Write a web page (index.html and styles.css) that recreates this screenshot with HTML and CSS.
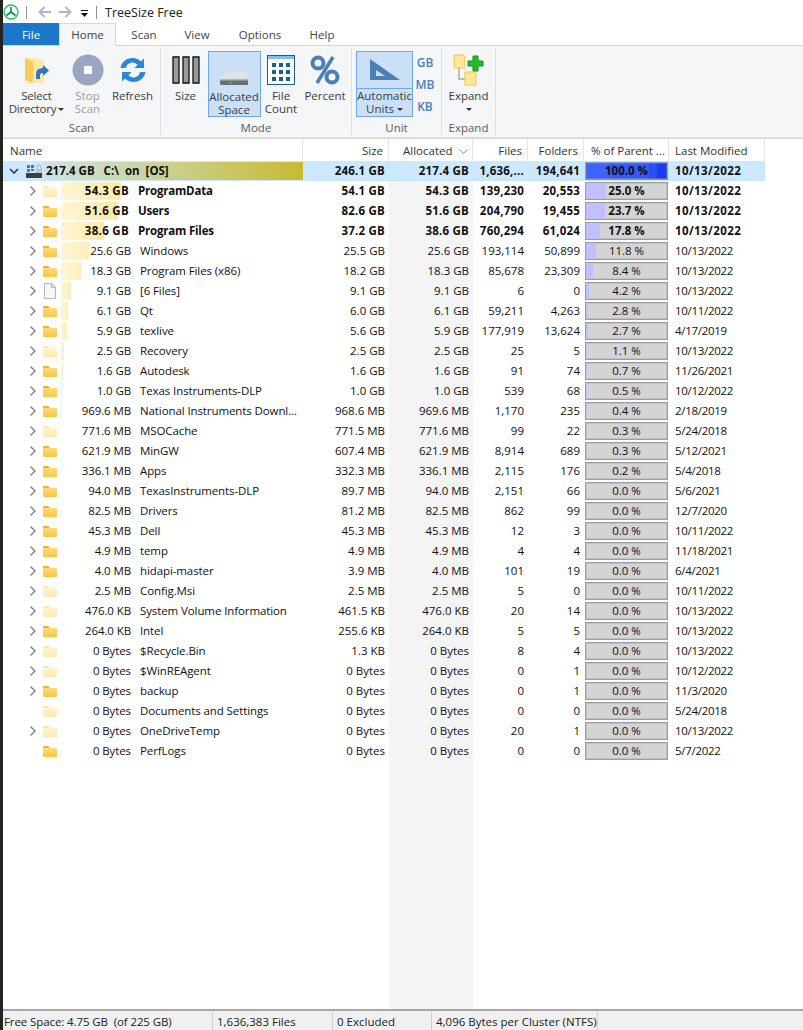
FILE: index.html
```html
<!DOCTYPE html>
<html lang="en">
<head>
    <meta charset="UTF-8">
    <title>TreeSize Free</title>
    <link rel="stylesheet" href="styles.css">
</head>
<body>
<svg class="defs" width="0" height="0">
    <defs>
        <linearGradient id="fold-full" x1="0" y1="0" x2="0" y2="1">
            <stop offset="0" stop-color="#fde08a"/><stop offset="1" stop-color="#fbc63e"/>
        </linearGradient>
        <linearGradient id="fold-pale" x1="0" y1="0" x2="0" y2="1">
            <stop offset="0" stop-color="#fff6d8"/><stop offset="1" stop-color="#feeab0"/>
        </linearGradient>
        <symbol id="folder" viewBox="0 0 14 11">
            <path d="M0 1q0-1 1-1h4l2 2h6q1 0 1 1v7q0 1-1 1H1q-1 0-1-1z" fill="url(#fold-full)"/>
            <path d="M0 1q0-1 1-1h4l2 2H0z" fill="#eeb02e"/>
        </symbol>
        <symbol id="folder-pale" viewBox="0 0 14 11">
            <path d="M0 1q0-1 1-1h4l2 2h6q1 0 1 1v7q0 1-1 1H1q-1 0-1-1z" fill="url(#fold-pale)"/>
            <path d="M0 1q0-1 1-1h4l2 2H0z" fill="#fbe7ae"/>
        </symbol>
        <symbol id="chev" viewBox="0 0 8 12">
            <path d="M1.5 1.5 6 6l-4.500 4.500" fill="none" stroke="#8a8a8a" stroke-width="1.500"/>
        </symbol>
    </defs>
</svg>

<div class="edge"></div>
<div class="app">
    <div class="titlebar">
        <svg class="logo" width="16" height="16" viewBox="0 0 16 16">
            <circle cx="8" cy="8" r="7" fill="#fff" stroke="#19c25c" stroke-width="1.300"/>
            <path d="M8 3v5M8 8l-4.500 3.500M8 8l4.500 3.500" stroke="#0d8a4a" stroke-width="1.600" fill="none"/>
        </svg>
        <span class="qsep first"></span>
        <svg class="arrow" width="14" height="12" viewBox="0 0 14 12"><path d="M13 6H2M6.500 1 1.500 6l5 5" fill="none" stroke="#aab7cd" stroke-width="2"/></svg>
        <svg class="arrow next" width="14" height="12" viewBox="0 0 14 12"><path d="M1 6h11M7.500 1l5 5-5 5" fill="none" stroke="#aab7cd" stroke-width="2"/></svg>
        <svg class="qdrop" width="7" height="7" viewBox="0 0 7 7"><path d="M0 0h7v1H0zM0 3h7L3.500 7z" fill="#111"/></svg>
        <span class="qsep"></span>
        <span class="apptitle">TreeSize Free</span>
    </div>

    <div class="tabs">
        <div class="tab file">File</div>
        <div class="tab active">Home</div>
        <div class="tab scan">Scan</div>
        <div class="tab view">View</div>
        <div class="tab options">Options</div>
        <div class="tab help">Help</div>
    </div>

    <div class="ribbon">
        <div class="group g-scan">
            <div class="items">
                <div class="btn w-select">
                    <svg class="ico" width="26" height="30" viewBox="0 0 26 30">
                        <path d="M1 3h11l8 3v22H1z" fill="#fde9a4"/>
                        <path d="M1 3l8 4v20l-8-2z" fill="#f7c95c"/>
                        <path d="M12 24v-5q0-6 7-6v-3l6 5.500-6 5.500v-3q-3 0-3 2v4z" fill="#2b78c8"/>
                    </svg>
                    <span class="nowrap">Select<br>Directory<i class="caret side"></i></span>
                </div>
                <div class="btn w-stop off">
                    <svg class="ico" width="32" height="32" viewBox="0 0 32 32">
                        <circle cx="16" cy="16" r="15.500" fill="#9aa6c2"/>
                        <rect x="12" y="12" width="8" height="8" fill="#fff"/>
                    </svg>
                    <span>Stop<br>Scan</span>
                </div>
                <div class="btn w-refresh">
                    <svg class="ico" width="30" height="30" viewBox="0 0 30 30">
                        <path d="M2.500 13C3.500 7 8.500 3 14.500 3c3.500 0 6.500 1.500 8.500 3.500L26 3.500V13h-9.500l3-3c-1.200-1.500-3-2.500-5-2.500-3.300 0-6 2.300-6.500 5.500z" fill="#2b85db"/>
                        <path d="M27.500 17c-1 6-6 10-12 10-3.500 0-6.500-1.500-8.500-3.500L4 26.500V17h9.500l-3 3c1.200 1.500 3 2.500 5 2.500 3.300 0 6-2.300 6.500-5.500z" fill="#2b85db"/>
                    </svg>
                    <span>Refresh</span>
                </div>
            </div>
            <div class="glabel">Scan</div>
        </div>

        <div class="group g-mode">
            <div class="items">
                <div class="btn w-size">
                    <svg class="ico" width="28" height="28" viewBox="0 0 28 28">
                        <path d="M1 1h6v26H1zM11 1h6v26h-6zM21 1h6v26h-6z" fill="#9a9a9a" stroke="#111" stroke-width="1.300"/>
                    </svg>
                    <span>Size</span>
                </div>
                <div class="btn w-alloc on">
                    <svg class="ico" width="30" height="32" viewBox="0 0 30 32">
                        <path d="M1 24 9 17h18l2 6z" fill="#dfe3e3"/>
                        <path d="M1 24h28v5q0 1-1 1H3q-2 0-2-1z" fill="#6c6f70"/>
                        <path d="M1 24h28v1.500H1z" fill="#b4b8b8"/>
                        <rect x="11" y="27" width="2" height="1.500" fill="#3ad06a"/>
                    </svg>
                    <span>Allocated<br>Space</span>
                </div>
                <div class="btn w-count">
                    <svg class="ico" width="28" height="30" viewBox="0 0 28 30">
                        <rect x=".5" y=".5" width="27" height="29" fill="#fff" stroke="#1f5f86"/>
                        <rect x="1" y="1" width="26" height="3" fill="#7ec0ee"/>
                        <path d="M5 8h4v4H5zM12 8h4v4h-4zM19 8h4v4h-4zM5 15h4v4H5zM12 15h4v4h-4zM19 15h4v4h-4zM5 22h4v4H5zM12 22h4v4h-4zM19 22h4v4h-4z" fill="#1f5f86"/>
                    </svg>
                    <span>File<br>Count</span>
                </div>
                <div class="btn w-pct">
                    <svg class="ico" width="30" height="30" viewBox="0 0 30 30">
                        <circle cx="8" cy="8" r="5.500" fill="none" stroke="#4b7fb8" stroke-width="4"/>
                        <circle cx="22" cy="22" r="5.500" fill="none" stroke="#4b7fb8" stroke-width="4"/>
                        <path d="M23 2 7 28" stroke="#4b7fb8" stroke-width="3.500"/>
                    </svg>
                    <span>Percent</span>
                </div>
            </div>
            <div class="glabel">Mode</div>
        </div>

        <div class="group g-unit">
            <div class="items">
                <div class="split">
                    <div class="split-top">
                        <svg width="30" height="22" viewBox="0 0 30 22">
                            <path fill-rule="evenodd" d="M0 0 30 21H0zM6 11v6h9z" fill="#4b7fb8"/>
                        </svg>
                    </div>
                    <div class="split-bottom">Automatic<br>Units <i class="caret"></i></div>
                </div>
                <div class="units"><span>GB</span><span>MB</span><span>KB</span></div>
            </div>
            <div class="glabel">Unit</div>
        </div>

        <div class="group g-expand">
            <div class="items">
                <div class="btn w-expand">
                    <svg class="ico" width="32" height="32" viewBox="0 0 32 32">
                        <path d="M6 12v13h12" fill="none" stroke="#a9a9a9" stroke-width="1.500"/>
                        <path d="M1 1h9l2 2v11H1z" fill="#fde79c" stroke="#f3c54a"/>
                        <path d="M12 19h9l2 2v11H12z" transform="translate(0 -1)" fill="#fde79c" stroke="#f3c54a"/>
                        <path d="M20 2h5v5h5v5h-5v5h-5v-5h-5V7h5z" fill="#1fbf2c" stroke="#148a1e"/>
                    </svg>
                    <span>Expand<br><i class="caret"></i></span>
                </div>
            </div>
            <div class="glabel">Expand</div>
        </div>
    </div>

    <div class="treehead">
        <div class="hcell h-name">Name</div>
        <div class="hcell h-right">Size</div>
        <div class="hcell h-alloc">Allocated
            <svg width="9" height="5" viewBox="0 0 9 5"><path d="M.5.5l4 4 4-4" fill="none" stroke="#9a9a9a"/></svg>
        </div>
        <div class="hcell h-right">Files</div>
        <div class="hcell h-right">Folders</div>
        <div class="hcell h-pct">% of Parent ...</div>
        <div class="hcell h-date">Last Modified</div>
    </div>

    <div class="tree">
        <div class="row root bold">
            <div class="c-name">
                <svg class="rootchev" width="10" height="6" viewBox="0 0 10 6"><path d="M1 1l4 4 4-4" fill="none" stroke="#333" stroke-width="1.500"/></svg>
                <svg class="drive" width="16" height="15" viewBox="0 0 16 15">
                    <path d="M1 1h3v3H1zM5 1h3v3H5zM1 5h3v3H1zM5 5h3v2H5z" fill="#2f7fd0"/>
                    <path d="M11 5V3q0-2 2-2t2 2v2" fill="none" stroke="#aab"/>
                    <rect x="10" y="5" width="6" height="5" fill="#b7c7d8"/>
                    <path d="M0 9h16v5H0z" fill="#3c3f44"/>
                </svg>
                <div class="rootbar">217.4 GB&nbsp;&nbsp; C:\&nbsp; on&nbsp; [OS]</div>
            </div>
            <div class="num">246.1 GB</div><div class="num">217.4 GB</div><div class="num">1,636,...</div><div class="num">194,641</div>
            <div class="pct"><div class="pbar rootfill"><span>100.0 %</span></div></div>
            <div class="date">10/13/2022</div>
        </div>

        <div class="row bold"><div class="c-name"><svg class="tw"><use href="#chev"/></svg><svg class="fo"><use href="#folder-pale"/></svg><span class="amt" style="background-size:60px 18px">54.3 GB</span><span class="nm">ProgramData</span></div><div class="num">54.1 GB</div><div class="num">54.3 GB</div><div class="num">139,230</div><div class="num">20,553</div><div class="pct"><div class="pbar"><i style="width:25%"></i><span>25.0 %</span></div></div><div class="date">10/13/2022</div></div>
        <div class="row bold"><div class="c-name"><svg class="tw"><use href="#chev"/></svg><svg class="fo"><use href="#folder"/></svg><span class="amt" style="background-size:57px 18px">51.6 GB</span><span class="nm">Users</span></div><div class="num">82.6 GB</div><div class="num">51.6 GB</div><div class="num">204,790</div><div class="num">19,455</div><div class="pct"><div class="pbar"><i style="width:23.7%"></i><span>23.7 %</span></div></div><div class="date">10/13/2022</div></div>
        <div class="row bold"><div class="c-name"><svg class="tw"><use href="#chev"/></svg><svg class="fo"><use href="#folder"/></svg><span class="amt" style="background-size:43px 18px">38.6 GB</span><span class="nm">Program Files</span></div><div class="num">37.2 GB</div><div class="num">38.6 GB</div><div class="num">760,294</div><div class="num">61,024</div><div class="pct"><div class="pbar"><i style="width:17.8%"></i><span>17.8 %</span></div></div><div class="date">10/13/2022</div></div>
        <div class="row"><div class="c-name"><svg class="tw"><use href="#chev"/></svg><svg class="fo"><use href="#folder"/></svg><span class="amt" style="background-size:28px 18px">25.6 GB</span><span class="nm">Windows</span></div><div class="num">25.5 GB</div><div class="num">25.6 GB</div><div class="num">193,114</div><div class="num">50,899</div><div class="pct"><div class="pbar"><i style="width:11.8%"></i><span>11.8 %</span></div></div><div class="date">10/13/2022</div></div>
        <div class="row"><div class="c-name"><svg class="tw"><use href="#chev"/></svg><svg class="fo"><use href="#folder"/></svg><span class="amt" style="background-size:20px 18px">18.3 GB</span><span class="nm">Program Files (x86)</span></div><div class="num">18.2 GB</div><div class="num">18.3 GB</div><div class="num">85,678</div><div class="num">23,309</div><div class="pct"><div class="pbar"><i style="width:8.4%"></i><span>8.4 %</span></div></div><div class="date">10/13/2022</div></div>
        <div class="row"><div class="c-name"><svg class="tw"><use href="#chev"/></svg><svg class="fo page" viewBox="0 0 12 16"><path d="M.5.500h7l4 4v11H.500z" fill="#f7f7f7" stroke="#b5b5b5"/><path d="M7.500.500v4h4" fill="none" stroke="#b5b5b5"/></svg><span class="amt" style="background-size:10px 18px">9.1 GB</span><span class="nm">[6 Files]</span></div><div class="num">9.1 GB</div><div class="num">9.1 GB</div><div class="num">6</div><div class="num">0</div><div class="pct"><div class="pbar"><i style="width:4.2%"></i><span>4.2 %</span></div></div><div class="date">10/13/2022</div></div>
        <div class="row"><div class="c-name"><svg class="tw"><use href="#chev"/></svg><svg class="fo"><use href="#folder"/></svg><span class="amt" style="background-size:7px 18px">6.1 GB</span><span class="nm">Qt</span></div><div class="num">6.0 GB</div><div class="num">6.1 GB</div><div class="num">59,211</div><div class="num">4,263</div><div class="pct"><div class="pbar"><i style="width:2.8%"></i><span>2.8 %</span></div></div><div class="date">10/11/2022</div></div>
        <div class="row"><div class="c-name"><svg class="tw"><use href="#chev"/></svg><svg class="fo"><use href="#folder"/></svg><span class="amt" style="background-size:6px 18px">5.9 GB</span><span class="nm">texlive</span></div><div class="num">5.6 GB</div><div class="num">5.9 GB</div><div class="num">177,919</div><div class="num">13,624</div><div class="pct"><div class="pbar"><i style="width:2.7%"></i><span>2.7 %</span></div></div><div class="date">4/17/2019</div></div>
        <div class="row"><div class="c-name"><svg class="tw"><use href="#chev"/></svg><svg class="fo"><use href="#folder-pale"/></svg><span class="amt" style="background-size:3px 18px">2.5 GB</span><span class="nm">Recovery</span></div><div class="num">2.5 GB</div><div class="num">2.5 GB</div><div class="num">25</div><div class="num">5</div><div class="pct"><div class="pbar"><i style="width:1.1%"></i><span>1.1 %</span></div></div><div class="date">10/13/2022</div></div>
        <div class="row"><div class="c-name"><svg class="tw"><use href="#chev"/></svg><svg class="fo"><use href="#folder"/></svg><span class="amt" style="background-size:2px 18px">1.6 GB</span><span class="nm">Autodesk</span></div><div class="num">1.6 GB</div><div class="num">1.6 GB</div><div class="num">91</div><div class="num">74</div><div class="pct"><div class="pbar"><i style="width:.7%"></i><span>0.7 %</span></div></div><div class="date">11/26/2021</div></div>
        <div class="row"><div class="c-name"><svg class="tw"><use href="#chev"/></svg><svg class="fo"><use href="#folder"/></svg><span class="amt" style="background-size:1px 18px">1.0 GB</span><span class="nm">Texas Instruments-DLP</span></div><div class="num">1.0 GB</div><div class="num">1.0 GB</div><div class="num">539</div><div class="num">68</div><div class="pct"><div class="pbar"><i style="width:.5%"></i><span>0.5 %</span></div></div><div class="date">10/12/2022</div></div>
        <div class="row"><div class="c-name"><svg class="tw"><use href="#chev"/></svg><svg class="fo"><use href="#folder"/></svg><span class="amt" style="background-size:1px 18px">969.6 MB</span><span class="nm">National Instruments Downl...</span></div><div class="num">968.6 MB</div><div class="num">969.6 MB</div><div class="num">1,170</div><div class="num">235</div><div class="pct"><div class="pbar"><i style="width:.4%"></i><span>0.4 %</span></div></div><div class="date">2/18/2019</div></div>
        <div class="row"><div class="c-name"><svg class="tw"><use href="#chev"/></svg><svg class="fo"><use href="#folder-pale"/></svg><span class="amt">771.6 MB</span><span class="nm">MSOCache</span></div><div class="num">771.5 MB</div><div class="num">771.6 MB</div><div class="num">99</div><div class="num">22</div><div class="pct"><div class="pbar"><span>0.3 %</span></div></div><div class="date">5/24/2018</div></div>
        <div class="row"><div class="c-name"><svg class="tw"><use href="#chev"/></svg><svg class="fo"><use href="#folder"/></svg><span class="amt">621.9 MB</span><span class="nm">MinGW</span></div><div class="num">607.4 MB</div><div class="num">621.9 MB</div><div class="num">8,914</div><div class="num">689</div><div class="pct"><div class="pbar"><span>0.3 %</span></div></div><div class="date">5/12/2021</div></div>
        <div class="row"><div class="c-name"><svg class="tw"><use href="#chev"/></svg><svg class="fo"><use href="#folder"/></svg><span class="amt">336.1 MB</span><span class="nm">Apps</span></div><div class="num">332.3 MB</div><div class="num">336.1 MB</div><div class="num">2,115</div><div class="num">176</div><div class="pct"><div class="pbar"><span>0.2 %</span></div></div><div class="date">5/4/2018</div></div>
        <div class="row"><div class="c-name"><svg class="tw"><use href="#chev"/></svg><svg class="fo"><use href="#folder"/></svg><span class="amt">94.0 MB</span><span class="nm">TexasInstruments-DLP</span></div><div class="num">89.7 MB</div><div class="num">94.0 MB</div><div class="num">2,151</div><div class="num">66</div><div class="pct"><div class="pbar"><span>0.0 %</span></div></div><div class="date">5/6/2021</div></div>
        <div class="row"><div class="c-name"><svg class="tw"><use href="#chev"/></svg><svg class="fo"><use href="#folder"/></svg><span class="amt">82.5 MB</span><span class="nm">Drivers</span></div><div class="num">81.2 MB</div><div class="num">82.5 MB</div><div class="num">862</div><div class="num">99</div><div class="pct"><div class="pbar"><span>0.0 %</span></div></div><div class="date">12/7/2020</div></div>
        <div class="row"><div class="c-name"><svg class="tw"><use href="#chev"/></svg><svg class="fo"><use href="#folder"/></svg><span class="amt">45.3 MB</span><span class="nm">Dell</span></div><div class="num">45.3 MB</div><div class="num">45.3 MB</div><div class="num">12</div><div class="num">3</div><div class="pct"><div class="pbar"><span>0.0 %</span></div></div><div class="date">10/11/2022</div></div>
        <div class="row"><div class="c-name"><svg class="tw"><use href="#chev"/></svg><svg class="fo"><use href="#folder"/></svg><span class="amt">4.9 MB</span><span class="nm">temp</span></div><div class="num">4.9 MB</div><div class="num">4.9 MB</div><div class="num">4</div><div class="num">4</div><div class="pct"><div class="pbar"><span>0.0 %</span></div></div><div class="date">11/18/2021</div></div>
        <div class="row"><div class="c-name"><svg class="tw"><use href="#chev"/></svg><svg class="fo"><use href="#folder"/></svg><span class="amt">4.0 MB</span><span class="nm">hidapi-master</span></div><div class="num">3.9 MB</div><div class="num">4.0 MB</div><div class="num">101</div><div class="num">19</div><div class="pct"><div class="pbar"><span>0.0 %</span></div></div><div class="date">6/4/2021</div></div>
        <div class="row"><div class="c-name"><svg class="tw"><use href="#chev"/></svg><svg class="fo"><use href="#folder-pale"/></svg><span class="amt">2.5 MB</span><span class="nm">Config.Msi</span></div><div class="num">2.5 MB</div><div class="num">2.5 MB</div><div class="num">5</div><div class="num">0</div><div class="pct"><div class="pbar"><span>0.0 %</span></div></div><div class="date">10/11/2022</div></div>
        <div class="row"><div class="c-name"><svg class="tw"><use href="#chev"/></svg><svg class="fo"><use href="#folder-pale"/></svg><span class="amt">476.0 KB</span><span class="nm">System Volume Information</span></div><div class="num">461.5 KB</div><div class="num">476.0 KB</div><div class="num">20</div><div class="num">14</div><div class="pct"><div class="pbar"><span>0.0 %</span></div></div><div class="date">10/13/2022</div></div>
        <div class="row"><div class="c-name"><svg class="tw"><use href="#chev"/></svg><svg class="fo"><use href="#folder"/></svg><span class="amt">264.0 KB</span><span class="nm">Intel</span></div><div class="num">255.6 KB</div><div class="num">264.0 KB</div><div class="num">5</div><div class="num">5</div><div class="pct"><div class="pbar"><span>0.0 %</span></div></div><div class="date">10/13/2022</div></div>
        <div class="row"><div class="c-name"><svg class="tw"><use href="#chev"/></svg><svg class="fo"><use href="#folder-pale"/></svg><span class="amt">0 Bytes</span><span class="nm">$Recycle.Bin</span></div><div class="num">1.3 KB</div><div class="num">0 Bytes</div><div class="num">8</div><div class="num">4</div><div class="pct"><div class="pbar"><span>0.0 %</span></div></div><div class="date">10/13/2022</div></div>
        <div class="row"><div class="c-name"><svg class="tw"><use href="#chev"/></svg><svg class="fo"><use href="#folder-pale"/></svg><span class="amt">0 Bytes</span><span class="nm">$WinREAgent</span></div><div class="num">0 Bytes</div><div class="num">0 Bytes</div><div class="num">0</div><div class="num">1</div><div class="pct"><div class="pbar"><span>0.0 %</span></div></div><div class="date">10/12/2022</div></div>
        <div class="row"><div class="c-name"><svg class="tw"><use href="#chev"/></svg><svg class="fo"><use href="#folder"/></svg><span class="amt">0 Bytes</span><span class="nm">backup</span></div><div class="num">0 Bytes</div><div class="num">0 Bytes</div><div class="num">0</div><div class="num">1</div><div class="pct"><div class="pbar"><span>0.0 %</span></div></div><div class="date">11/3/2020</div></div>
        <div class="row"><div class="c-name"><span class="tw"></span><svg class="fo"><use href="#folder-pale"/></svg><span class="amt">0 Bytes</span><span class="nm">Documents and Settings</span></div><div class="num">0 Bytes</div><div class="num">0 Bytes</div><div class="num">0</div><div class="num">0</div><div class="pct"><div class="pbar"><span>0.0 %</span></div></div><div class="date">5/24/2018</div></div>
        <div class="row"><div class="c-name"><svg class="tw"><use href="#chev"/></svg><svg class="fo"><use href="#folder-pale"/></svg><span class="amt">0 Bytes</span><span class="nm">OneDriveTemp</span></div><div class="num">0 Bytes</div><div class="num">0 Bytes</div><div class="num">20</div><div class="num">1</div><div class="pct"><div class="pbar"><span>0.0 %</span></div></div><div class="date">10/13/2022</div></div>
        <div class="row"><div class="c-name"><span class="tw"></span><svg class="fo"><use href="#folder"/></svg><span class="amt">0 Bytes</span><span class="nm">PerfLogs</span></div><div class="num">0 Bytes</div><div class="num">0 Bytes</div><div class="num">0</div><div class="num">0</div><div class="pct"><div class="pbar"><span>0.0 %</span></div></div><div class="date">5/7/2022</div></div>
    </div>

    <div class="statusbar">
        <div class="st st-free">Free Space: 4.75 GB&nbsp; (of 225 GB)</div>
        <div class="st st-files">1,636,383 Files</div>
        <div class="st st-excl">0 Excluded</div>
        <div class="st st-last">4,096 Bytes per Cluster (NTFS)</div>
    </div>
</div>
</body>
</html>
```

FILE: styles.css
```css
* {
    margin: 0;
    padding: 0;
    box-sizing: border-box;
}
html, body {
    height: 100%;
    overflow: hidden;
}
body {
    display: flex;
    font-family: "Open Sans", "Noto Sans", sans-serif;
    font-size: 11.5px;
    color: #111;
    background: #fff;
}
.defs { position: absolute; }
.edge {
    width: 3px;
    background: #232323;
}
.app {
    flex: 1;
    min-width: 0;
    display: flex;
    flex-direction: column;
}

/* title bar */
.titlebar {
    height: 23px;
    display: flex;
    align-items: center;
    background: #fff;
    padding-top: 1px;
}
.qsep {
    width: 1px;
    height: 13px;
    background: #8f8f8f;
    margin: 0 8px;
}
.qsep.first { margin: 0 11px 0 7px; }
.arrow.next { margin-left: 6px; }
.qdrop { margin-left: 9px; margin-top: 2px; }
.apptitle { font-size: 12.5px; color: #222; }

/* tabs */
.tabs {
    height: 23px;
    display: flex;
    background: #fff;
    border-bottom: 1px solid #d8d8d8;
    color: #444;
    font-size: 11.5px;
}
.tab {
    line-height: 23px;
    text-align: center;
}
.tab.file { width: 56px; background: #1a77c9; color: #fff; }
.tab.active {
    width: 57px;
    height: 24px;
    background: #f5f6f7;
    border: 1px solid #d8d8d8;
    border-bottom: none;
    line-height: 21px;
}
.tab.scan { width: 56px; }
.tab.view { width: 50px; }
.tab.options { width: 76px; }
.tab.help { width: 48px; }

/* ribbon */
.ribbon {
    height: 93px;
    display: flex;
    background: #f5f6f7;
    border-bottom: 2px solid #dcdcdc;
    color: #3c3c3c;
}
.group {
    display: flex;
    flex-direction: column;
    align-items: center;
    padding-top: 3px;
    border-right: 1px solid #dcdfe2;
    height: 87px;
    margin-top: 2px;
}
.g-scan { width: 158px; }
.g-mode { width: 191px; }
.g-unit { width: 90px; }
.g-expand { width: 54px; }
.items {
    height: 70px;
    display: flex;
}
.glabel {
    color: #5c5c5c;
    line-height: 14px;
    margin-top: 2px;
}
.btn {
    height: 66px;
    display: flex;
    flex-direction: column;
    align-items: center;
    text-align: center;
    line-height: 13px;
}
.btn .ico {
    height: 38px;
    flex: none;
}
.btn.off { color: #9c9c9c; }
.btn.on {
    background: #cbe0f6;
    border: 1px solid #6ea8e6;
}
.nowrap { white-space: nowrap; letter-spacing: -.2px; }
.w-select { width: 58px; }
.w-stop { width: 44px; }
.w-refresh { width: 46px; }
.w-size { width: 44px; }
.w-alloc { width: 53px; }
.w-count { width: 41px; }
.w-pct { width: 47px; }
.w-expand { width: 50px; }
.caret {
    display: inline-block;
    border: 3px solid transparent;
    border-top: 3px solid #333;
    border-bottom: none;
    vertical-align: middle;
}
.caret.side { margin-left: 2px; }
.split {
    width: 57px;
    height: 66px;
    border: 1px solid #6ea8e6;
    background: #cbe0f6;
}
.split-top {
    height: 37px;
    display: flex;
    align-items: center;
    justify-content: center;
    border-bottom: 1px solid #6ea8e6;
}
.split-bottom {
    text-align: center;
    line-height: 13px;
}
.units {
    width: 24px;
    height: 66px;
    display: flex;
    flex-direction: column;
    justify-content: space-around;
    align-items: center;
    color: #4b7fb8;
    font-weight: 600;
    font-size: 12px;
}

/* tree header */
.treehead {
    height: 22px;
    display: grid;
    grid-template-columns: 300px 86px 84px 55px 56px 85px 96px;
    width: 762px;
    line-height: 24px;
    color: #333;
    flex: none;
}
.hcell {
    border-right: 1px solid #e5e5e5;
    padding: 0 5px;
}
.h-name { padding-left: 7px; }
.h-right { text-align: right; }
.h-alloc { padding-left: 14px; white-space: nowrap; }
.h-alloc svg { margin-left: 4px; vertical-align: middle; }
.h-pct { padding-left: 7px; white-space: nowrap; }
.h-date { padding-left: 6px; white-space: nowrap; }

/* tree rows */
.tree {
    flex: 1;
    min-height: 0;
    background: linear-gradient(to right, transparent 386px, #f4f4f4 386px, #f4f4f4 470px, transparent 470px);
}
.row {
    height: 20px;
    width: 762px;
    display: grid;
    grid-template-columns: 300px 86px 84px 55px 56px 85px 96px;
    align-items: center;
    white-space: nowrap;
    line-height: 20px;
}
.bold { font-weight: 700; }
.root { background: #cce8ff; }
.c-name {
    display: flex;
    align-items: center;
    height: 20px;
}
.tw {
    width: 8px;
    height: 12px;
    margin-left: 26px;
    flex: none;
}
.fo {
    width: 14px;
    height: 11px;
    margin-left: 6px;
    flex: none;
}
.fo.page { height: 16px; }
.amt {
    width: 70px;
    height: 18px;
    line-height: 18px;
    margin-left: 4px;
    text-align: right;
    flex: none;
    letter-spacing: -.1px;
    background-image: linear-gradient(to right, #fff6d6, #ffefbc);
    background-repeat: no-repeat;
    background-size: 0 0;
}
.nm { margin-left: 9px; letter-spacing: -.1px; }
.bold .amt {
    width: 68px;
    letter-spacing: .3px;
    background-image: linear-gradient(to right, #fff6d6, #ffe9a6);
}
.bold .nm { letter-spacing: -.2px; }
.num {
    text-align: right;
    padding-right: 4px;
}
.bold .num { letter-spacing: .2px; }
.pct { padding-left: 1px; }
.pbar {
    position: relative;
    width: 83px;
    height: 18px;
    background: #d4d4d4;
    border: 1px solid #9c9c9c;
    box-shadow: inset 0 0 0 1px rgba(160, 160, 160, .35);
    text-align: center;
    line-height: 16px;
}
.pbar i {
    position: absolute;
    left: 0;
    top: 0;
    bottom: 0;
    background: #c0c0ff;
}
.pbar span { position: relative; }
.rootfill {
    background: linear-gradient(to right, #3f62ff 30%, #3558ff 30%, #3558ff 78%, #2d4ef5 78%, #2d4ef5 88%, #1c3cf0 88%);
    border-color: #7f9ccf;
}
.date { padding-left: 6px; letter-spacing: -.3px; }
.bold .date { letter-spacing: .4px; }
.rootchev { margin-left: 6px; flex: none; }
.drive { margin-left: 7px; flex: none; }
.rootbar {
    width: 260px;
    height: 18px;
    line-height: 18px;
    margin-left: 2px;
    padding-left: 2px;
    background: linear-gradient(to right, #cde4e6, #c8ba32);
}

/* status bar */
.statusbar {
    height: 21px;
    display: flex;
    flex: none;
    background: #f0f0f0;
    border-top: 2px solid #a8a8a8;
    line-height: 21px;
    color: #222;
}
.st {
    padding-left: 2px;
    border-right: 1px solid #d0d0d0;
}
.st-free { width: 210px; padding-left: 1px; padding-right: 1px; letter-spacing: -.1px; }
.st-files { width: 120px; padding-left: 4px; }
.st-excl { width: 99px; padding-left: 4px; }
.st-last { padding-left: 4px; }
```
